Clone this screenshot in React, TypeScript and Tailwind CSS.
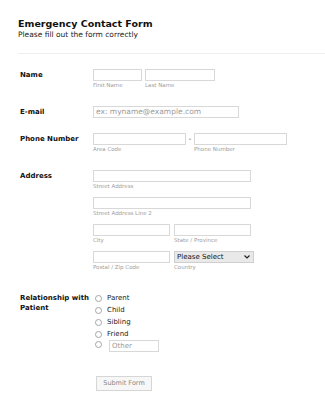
const font = { fontFamily: '"DejaVu Sans", Verdana, sans-serif' }

function Box({ w, placeholder }: { w: string; placeholder?: string }) {
  return (
    <div className={`${w} h-[12px] border border-[#d8d8d8] bg-white flex items-center pl-[2px] text-[7.5px] leading-none text-[#9a9a9a]`}>
      {placeholder}
    </div>
  )
}

function Field({ w, sub }: { w: string; sub: string }) {
  return (
    <div className="flex flex-col">
      <Box w={w} />
      <span className="mt-[1px] text-[5.5px] leading-[7px] text-[#9e9e9e]">{sub}</span>
    </div>
  )
}

function Label({ children }: { children: React.ReactNode }) {
  return <div className="w-[75px] shrink-0 pl-[2px] text-[7px] font-bold leading-[12px] text-[#111]">{children}</div>
}

function Radio({ label }: { label: string }) {
  return (
    <div className="flex h-[12px] items-center">
      <span className="ml-[2px] h-[7px] w-[7px] rounded-full border border-[#a5a5a5] bg-white" />
      <span className="ml-[5px] text-[7px] leading-none text-[#222]">{label}</span>
    </div>
  )
}

export default function App() {
  return (
    <div className="w-[325px] h-[400px] overflow-hidden bg-white pl-[18px] pt-[18px]" style={font}>
      <h1 className="text-[9.5px] font-bold leading-[12px] text-[#111]">Emergency Contact Form</h1>
      <p className="text-[7.5px] leading-[10px] text-[#222]">Please fill out the form correctly</p>
      <div className="mt-[13px] h-px bg-[#eeeeee]" />

      {/* Name */}
      <div className="mt-[15px] flex">
        <Label>Name</Label>
        <div className="flex gap-[3px]">
          <Field w="w-[49px]" sub="First Name" />
          <Field w="w-[70px]" sub="Last Name" />
        </div>
      </div>

      {/* E-mail */}
      <div className="mt-[17px] flex">
        <Label>E-mail</Label>
        <Box w="w-[146px]" placeholder="ex: myname@example.com" />
      </div>

      {/* Phone */}
      <div className="mt-[15px] flex">
        <Label>Phone Number</Label>
        <div className="flex">
          <Field w="w-[93px]" sub="Area Code" />
          <span className="w-[8px] text-center text-[7px] leading-[12px] text-[#333]">-</span>
          <Field w="w-[93px]" sub="Phone Number" />
        </div>
      </div>

      {/* Address */}
      <div className="mt-[17px] flex">
        <Label>Address</Label>
        <div className="flex flex-col gap-[7px]">
          <Field w="w-[158px]" sub="Street Address" />
          <Field w="w-[158px]" sub="Street Address Line 2" />
          <div className="flex gap-[4px]">
            <Field w="w-[77px]" sub="City" />
            <Field w="w-[77px]" sub="State / Province" />
          </div>
          <div className="flex gap-[4px]">
            <Field w="w-[77px]" sub="Postal / Zip Code" />
            <div className="flex flex-col">
              <div className="flex h-[12px] w-[80px] items-center justify-between border border-[#cfcfcf] bg-[#e9e9e9] pl-[2px] pr-[3px]">
                <span className="text-[7px] leading-none text-[#111]">Please Select</span>
                <svg width="6" height="4" viewBox="0 0 6 4">
                  <path d="M0.5 0.5 L3 3 L5.5 0.5" fill="none" stroke="#222" strokeWidth="1.2" />
                </svg>
              </div>
              <span className="mt-[1px] text-[5.5px] leading-[7px] text-[#9e9e9e]">Country</span>
            </div>
          </div>
        </div>
      </div>

      {/* Relationship */}
      <div className="mt-[21px] flex">
        <div className="w-[75px] shrink-0 pl-[2px] pt-[1px] text-[7px] font-bold leading-[10px] text-[#111]">
          Relationship with Patient
        </div>
        <div className="flex flex-col">
          <Radio label="Parent" />
          <Radio label="Child" />
          <Radio label="Sibling" />
          <Radio label="Friend" />
          <div className="flex h-[12px] items-center">
            <span className="ml-[2px] mt-[1px] h-[7px] w-[7px] self-start rounded-full border border-[#a5a5a5] bg-white" />
            <div className="ml-[7px] flex h-[12px] w-[50px] items-center border border-[#d8d8d8] pl-[2px] text-[7px] leading-none text-[#9a9a9a]">
              Other
            </div>
          </div>
        </div>
      </div>

      {/* Submit */}
      <div className="mt-[24px] pl-[78px]">
        <button className="flex h-[15px] w-[56px] items-center justify-center border border-[#d6d6d6] bg-[#f7f7f7] text-[6.5px] leading-none text-[#888]">
          Submit Form
        </button>
      </div>
    </div>
  )
}
